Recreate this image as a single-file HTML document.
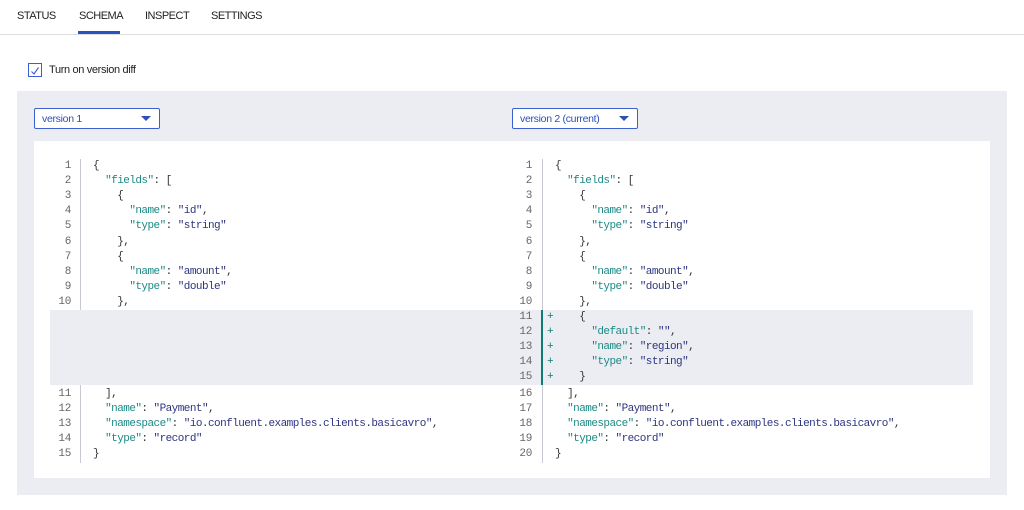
<!DOCTYPE html>
<html><head><style>
*{margin:0;padding:0;box-sizing:border-box}
body{width:1024px;height:510px;background:#fff;font-family:"Liberation Sans",sans-serif;position:relative;overflow:hidden}
.tab{position:absolute;top:10px;font-size:11px;color:#222;letter-spacing:-0.5px}
.hdr{position:absolute;left:0;top:34px;width:1024px;height:1px;background:#ddd}
.ul{position:absolute;left:78px;top:31px;width:42px;height:3px;background:#2a52be}
.cb{position:absolute;left:28px;top:63px;width:14px;height:14px;border:1px solid #3b5fd0;background:#fff}
.lbl{position:absolute;left:49px;top:64px;font-size:11px;color:#222;letter-spacing:-0.35px}
.panel{position:absolute;left:17px;top:91px;width:990px;height:404px;background:#ecedf2}
.sel{position:absolute;top:108px;width:126px;height:21px;border:1px solid #3b5fd0;background:#fff;border-radius:2px;font-size:10.5px;color:#2a4fb8;padding:4px 0 0 7px;letter-spacing:-0.3px}
.sel i{position:absolute;right:8px;top:7px;width:0;height:0;border-left:5px solid transparent;border-right:5px solid transparent;border-top:5px solid #2a4fb8}
.code{position:absolute;left:34px;top:141px;width:956px;height:337px;background:#fff}
.hl{position:absolute;left:50px;top:310px;width:923px;height:75px;background:#ecedf2}
.bar{position:absolute;left:541px;top:310px;width:2px;height:75px;background:#0e7c74}
.gut{position:absolute;width:1px;background:#c8c8d0}
.ln{position:absolute;height:15px;line-height:15px;font-family:"Liberation Mono",monospace;font-size:11px;letter-spacing:-0.55px;white-space:pre;color:#333}
.n{position:absolute;width:30px;text-align:right;height:15px;line-height:15px;font-family:"Liberation Mono",monospace;font-size:11px;letter-spacing:-0.3px;color:#666}
.k{color:#1a8a85}.v{color:#2c3580}
.p{position:absolute;font-family:"Liberation Mono",monospace;font-size:11px;color:#0e7c74;height:15px;line-height:15px}
</style></head><body>
<div class="tab" style="left:17px">STATUS</div>
<div class="tab" style="left:79px">SCHEMA</div>
<div class="tab" style="left:145px">INSPECT</div>
<div class="tab" style="left:211px">SETTINGS</div>
<div class="hdr"></div><div class="ul"></div>
<div class="cb"><svg width="12" height="12" viewBox="0 0 12 12"><path d="M2.5 6.5 L5 9 L9.5 2.5" fill="none" stroke="#3b5fd0" stroke-width="1.1"/></svg></div>
<div class="lbl">Turn on version diff</div>
<div class="panel"></div>
<div class="sel" style="left:34px">version 1<i></i></div>
<div class="sel" style="left:512px">version 2 (current)<i></i></div>
<div class="code"></div>
<div class="hl"></div>
<div class="gut" style="left:80px;top:159px;height:151px"></div>
<div class="gut" style="left:80px;top:385px;height:78px"></div>
<div class="gut" style="left:542px;top:159px;height:151px"></div>
<div class="gut" style="left:542px;top:385px;height:78px"></div>
<div class="bar"></div>
<div id="c"></div>
<script>
var L=[['{'],['  ','"fields"',': ['],['    {'],['      ','"name"',': ','"id"',','],['      ','"type"',': ','"string"'],['    },'],['    {'],['      ','"name"',': ','"amount"',','],['      ','"type"',': ','"double"'],['    },']];
var A=[['    {'],['      ','"default"',': ','""',','],['      ','"name"',': ','"region"',','],['      ','"type"',': ','"string"'],['    }']];
var E=[['  ],'],['  ','"name"',': ','"Payment"',','],['  ','"namespace"',': ','"io.confluent.examples.clients.basicavro"',','],['  ','"type"',': ','"record"'],['}']];
function f(a){var s='';for(var i=0;i<a.length;i++){var t=a[i];if(i==1)s+='<span class="k">'+t+'</span>';else if(i==3)s+='<span class="v">'+t+'</span>';else s+=t;}return s;}
var h='';
function line(x,nx,y,n,a){h+='<div class="n" style="left:'+nx+'px;top:'+y+'px">'+n+'</div><div class="ln" style="left:'+x+'px;top:'+y+'px">'+f(a)+'</div>';}
for(var i=0;i<10;i++){var y=159+15.1*i;line(93,41,y,i+1,L[i]);line(555,502,y,i+1,L[i]);}
for(var i=0;i<5;i++){var y=310+15*i;line(555,502,y,11+i,A[i]);h+='<div class="p" style="left:547px;top:'+y+'px">+</div>';}
for(var i=0;i<5;i++){var y=387+15.1*i;line(93,41,y,11+i,E[i]);line(555,502,y,16+i,E[i]);}
document.getElementById('c').innerHTML=h;
</script>
</body></html>
